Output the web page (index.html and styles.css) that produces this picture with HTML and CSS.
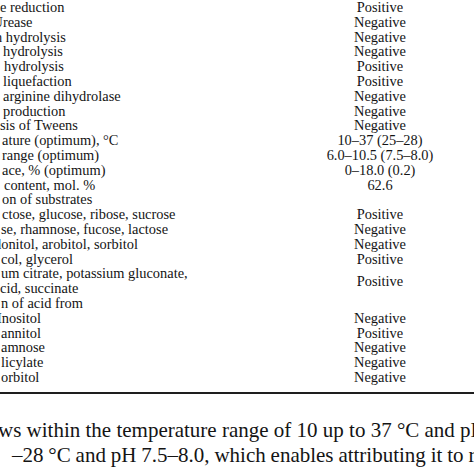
FILE: index.html
```html
<!DOCTYPE html>
<html>
<head>
<meta charset="utf-8">
<link rel="stylesheet" href="styles.css">
</head>
<body>
<div class="page">
  <div class="table">
    <div class="c l i0">e reduction</div><div class="c r">Positive</div>
    <div class="c l iu">Urease</div><div class="c r">Negative</div>
    <div class="c l in">n hydrolysis</div><div class="c r">Negative</div>
    <div class="c l i3">hydrolysis</div><div class="c r">Negative</div>
    <div class="c l i4">hydrolysis</div><div class="c r">Positive</div>
    <div class="c l i3">liquefaction</div><div class="c r">Positive</div>
    <div class="c l i3">arginine dihydrolase</div><div class="c r">Negative</div>
    <div class="c l i3">production</div><div class="c r">Negative</div>
    <div class="c l i0">sis of Tweens</div><div class="c r">Negative</div>
    <div class="c l i2">ature (optimum), °C</div><div class="c r">10–37 (25–28)</div>
    <div class="c l i2">range (optimum)</div><div class="c r">6.0–10.5 (7.5–8.0)</div>
    <div class="c l i2">ace, % (optimum)</div><div class="c r">0–18.0 (0.2)</div>
    <div class="c l i4">content, mol. %</div><div class="c r">62.6</div>
    <div class="c l i2">on of substrates</div><div class="c r"></div>
    <div class="c l i2">ctose, glucose, ribose, sucrose</div><div class="c r">Positive</div>
    <div class="c l i1">se, rhamnose, fucose, lactose</div><div class="c r">Negative</div>
    <div class="c l id">donitol, arobitol, sorbitol</div><div class="c r">Negative</div>
    <div class="c l i1">col, glycerol</div><div class="c r">Positive</div>
    <div class="c l i1">um citrate, potassium gluconate,<br>cid, succinate</div><div class="c r">Positive</div>
    <div class="c l i1">n of acid from</div><div class="c r"></div>
    <div class="c l ii">Inositol</div><div class="c r">Negative</div>
    <div class="c l i1">annitol</div><div class="c r">Positive</div>
    <div class="c l i1">amnose</div><div class="c r">Negative</div>
    <div class="c l i1">licylate</div><div class="c r">Negative</div>
    <div class="c l i1">orbitol</div><div class="c r">Negative</div>
  </div>
  <div class="rule"></div>
  <div class="para">
    <div class="line one">ws within the temperature range of 10 up to 37 °C and pH</div>
    <div class="line two">–28 °C and pH 7.5–8.0, which enables attributing it to r</div>
  </div>
</div>
</body>
</html>
```
FILE: styles.css
```css
html, body {
  margin: 0;
  padding: 0;
  background: #ffffff;
}
body {
  width: 474px;
  height: 474px;
  overflow: hidden;
  color: #141414;
  font-family: "Liberation Serif", "DejaVu Serif", serif;
}
.page {
  display: flex;
  flex-direction: column;
  width: 474px;
}
.table {
  display: grid;
  grid-template-columns: 300px 160px;
  align-items: center;
  margin-top: 0;
  font-size: 14.4px;
  line-height: 14.8px;
}
.c {
  white-space: nowrap;
}
.r {
  text-align: center;
}
.i0 { text-indent: 0; }
.i1 { text-indent: 1px; }
.i2 { text-indent: 2px; }
.i3 { text-indent: 3px; }
.i4 { text-indent: 4px; }
.iu { text-indent: -7.5px; }
.in { text-indent: -5px; }
.id { text-indent: -6px; }
.ii { text-indent: -3px; }
.rule {
  margin-top: 7px;
  height: 2px;
  background: #1e1e1e;
}
.para {
  margin-top: 24px;
  display: flex;
  flex-direction: column;
  font-size: 21px;
  line-height: 25px;
}
.line {
  white-space: nowrap;
}
.one {
  text-indent: -2px;
}
.two {
  text-indent: 12px;
  word-spacing: -0.4px;
}
```
